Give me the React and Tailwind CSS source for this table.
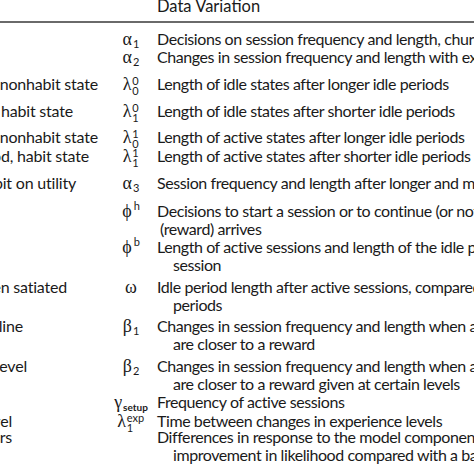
import React from "react";

const sans = { fontFamily: "Lato, 'Open Sans', sans-serif" };

// greek glyph plus optional scripts
const Sym = ({ g, sub, sup, subSmall, w = "w-[7px]" }) => (
  <span className="inline-flex items-baseline whitespace-nowrap tracking-normal">
    <span className="font-['Liberation_Serif',serif] text-[18px]">{g}</span>
    {sup && sub ? (
      <span className={"relative inline-block h-[1px] ml-[1px] " + w}>
        <span className="absolute left-0 top-[-14px] text-[11px] leading-[11px]">{sup}</span>
        <span className="absolute left-0 top-[-4px] text-[11px] leading-[11px]">{sub}</span>
      </span>
    ) : sup ? (
      <span className="text-[11px] ml-[2px] relative top-[-7px]">{sup}</span>
    ) : sub ? (
      <span className={(subSmall ? "text-[10px] font-bold" : "text-[11px]") + " ml-[1px] relative top-[3px]"}>{sub}</span>
    ) : null}
  </span>
);

const rows = [
  { mt: "mt-[7px]", sym: <Sym g="α" sub="1" />, lines: ["Decisions on session frequency and length, churn, and return decisions"] },
  { mt: "mt-0", sym: <Sym g="α" sub="2" />, lines: ["Changes in session frequency and length with experience levels"] },
  { mt: "mt-[9px]", left: "Idle period, nonhabit state", pr: "pr-[16px]", sym: <Sym g="λ" sup="0" sub="0" />, lines: ["Length of idle states after longer idle periods"] },
  { mt: "mt-[9px]", left: "Idle period, habit state", pr: "pr-[41px]", sym: <Sym g="λ" sup="0" sub="1" />, lines: ["Length of idle states after shorter idle periods"] },
  { mt: "mt-[8px]", left: "Active period, nonhabit state", pr: "pr-[16px]", sym: <Sym g="λ" sup="1" sub="0" />, lines: ["Length of active states after longer idle periods"] },
  { mt: "mt-[1px]", left: "Active period, habit state", pr: "pr-[25px]", sym: <Sym g="λ" sup="1" sub="1" />, lines: ["Length of active states after shorter idle periods"] },
  { mt: "mt-[9px]", left: "Effect of habit on utility", pr: "pr-[38px]", sym: <Sym g="α" sub="3" />, lines: ["Session frequency and length after longer and more frequent sessions"] },
  { mt: "mt-[10px]", sym: <Sym g="ϕ" sup="h" />, lines: ["Decisions to start a session or to continue (or not) when the", "(reward) arrives"], indent: "pl-[3px]" },
  { mt: "mt-0", sym: <Sym g="ϕ" sup="b" />, lines: ["Length of active sessions and length of the idle period after a", "session"] },
  { mt: "mt-[4px]", left: "Utility when satiated", pr: "pr-[47px]", sym: <Sym g="ω" />, lines: ["Idle period length after active sessions, compared with shorter", "periods"] },
  { mt: "mt-[3px]", left: "Reward deadline", pr: "pr-[91px]", sym: <Sym g="β" sub="1" />, lines: ["Changes in session frequency and length when agents", "are closer to a reward"] },
  { mt: "mt-[4px]", left: "Reward level", pr: "pr-[87px]", sym: <Sym g="β" sub="2" />, lines: ["Changes in session frequency and length when agents", "are closer to a reward given at certain levels"] },
  { mt: "mt-0", sym: <Sym g="γ" sub="setup" subSmall />, lines: ["Frequency of active sessions"] },
  { mt: "mt-[1px]", left: "Experience level", pr: "pr-[102px]", sym: <Sym g="λ" sup="exp" sub="1" w="w-[18px]" />, lines: ["Time between changes in experience levels"] },
  { mt: "mt-[-2px]", left: "Other parameters", pr: "pr-[102px]", lines: ["Differences in response to the model components, and the", "improvement in likelihood compared with a baseline model"] },
];

export default function App() {
  return (
    <div className="w-[474px] h-[474px] overflow-hidden bg-white text-[#1a1a1a] text-[16px] leading-[18px] tracking-[-0.42px]" style={sans}>
      <div className="mt-[-3px] grid grid-cols-[114px_34px_1fr]">
        <div />
        <div />
        <div className="pl-[9px] whitespace-nowrap text-[16.5px] tracking-normal">Data Variation</div>
      </div>
      <div className="mt-[6px] h-[2px] bg-[#6a6a6a]" />
      {rows.map((r, i) => (
        <div key={i} className={"grid grid-cols-[114px_34px_1fr] " + r.mt}>
          <div className={"overflow-hidden whitespace-nowrap h-[18px] tracking-[-0.2px] " + (r.pr || "")}>
            <div className="flex justify-end">{r.left || ""}</div>
          </div>
          <div className="flex justify-center h-[18px] overflow-visible">{r.sym}</div>
          <div className="pl-[9px] overflow-hidden whitespace-nowrap">
            {r.lines.map((l, j) => (
              <div key={j} className={j > 0 ? r.indent || "pl-[16px]" : ""}>{l}</div>
            ))}
          </div>
        </div>
      ))}
    </div>
  );
}
